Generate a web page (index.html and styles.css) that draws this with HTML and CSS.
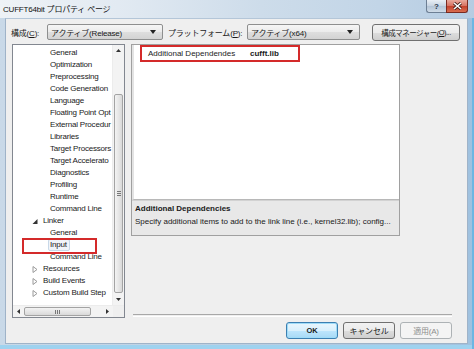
FILE: index.html
```html
<!DOCTYPE html>
<html lang="ja">
<head>
<meta charset="utf-8">
<title>CUFFT64bit プロパティ ページ</title>
<link rel="stylesheet" href="styles.css">
</head>
<body>
<div class="window">
  <div class="titlebar">
    <span class="title">CUFFT64bit プロパティ ページ</span>
    <div class="caption-btns">
      <span class="cap help">?</span>
      <span class="cap close"><svg width="9" height="8" viewBox="0 0 9 8"><path d="M1 1 L8 7 M8 1 L1 7" stroke="#3a1a14" stroke-width="3"/><path d="M1 1 L8 7 M8 1 L1 7" stroke="#fff" stroke-width="1.6"/></svg></span>
    </div>
  </div>
  <div class="frame">
    <div class="client">
      <div class="toolbar">
        <span class="lbl lbl1">構成(<u>C</u>):</span>
        <div class="combo c1"><span class="combo-text">アクティブ(Release)</span><svg class="drop" width="6" height="4" viewBox="0 0 6 4"><path d="M0 0 H6 L3 4 Z" fill="#222"/></svg></div>
        <span class="lbl lbl2">プラットフォーム(<u>P</u>):</span>
        <div class="combo c2"><span class="combo-text">アクティブ(x64)</span><svg class="drop" width="6" height="4" viewBox="0 0 6 4"><path d="M0 0 H6 L3 4 Z" fill="#222"/></svg></div>
        <div class="btn cfg">構成マネージャー(<u>O</u>)...</div>
      </div>
      <div class="main">
        <div class="tree">
          <div class="tree-view">
            <ul class="items">
              <li class="l2">General</li>
              <li class="l2">Optimization</li>
              <li class="l2">Preprocessing</li>
              <li class="l2">Code Generation</li>
              <li class="l2">Language</li>
              <li class="l2">Floating Point Opt</li>
              <li class="l2">External Procedur</li>
              <li class="l2">Libraries</li>
              <li class="l2">Target Processors</li>
              <li class="l2">Target Accelerato</li>
              <li class="l2">Diagnostics</li>
              <li class="l2">Profiling</li>
              <li class="l2">Runtime</li>
              <li class="l2">Command Line</li>
              <li class="l1"><svg class="exp" width="5" height="5" viewBox="0 0 5 5"><path d="M5 0 V5 H0 Z" fill="#333"/></svg>Linker</li>
              <li class="l2">General</li>
              <li class="l2"><span class="sel">Input</span></li>
              <li class="l2">Command Line</li>
              <li class="l1"><svg class="exp" width="5" height="7" viewBox="0 0 5 7"><path d="M0.5 0.5 L4.5 3.5 L0.5 6.5 Z" fill="none" stroke="#9a9a9a"/></svg>Resources</li>
              <li class="l1"><svg class="exp" width="5" height="7" viewBox="0 0 5 7"><path d="M0.5 0.5 L4.5 3.5 L0.5 6.5 Z" fill="none" stroke="#9a9a9a"/></svg>Build Events</li>
              <li class="l1"><svg class="exp" width="5" height="7" viewBox="0 0 5 7"><path d="M0.5 0.5 L4.5 3.5 L0.5 6.5 Z" fill="none" stroke="#9a9a9a"/></svg>Custom Build Step</li>
            </ul>
            <div class="vscroll">
              <div class="arr"><svg width="5" height="3" viewBox="0 0 5 3"><path d="M0 3 L2.5 0 L5 3 Z" fill="#333"/></svg></div>
              <div class="vtrack"><div class="vthumb"><span class="grip-h"></span></div></div>
              <div class="arr"><svg width="5" height="3" viewBox="0 0 5 3"><path d="M0 0 L2.5 3 L5 0 Z" fill="#333"/></svg></div>
            </div>
          </div>
          <div class="hscroll">
            <div class="harr"><svg width="3" height="5" viewBox="0 0 3 5"><path d="M3 0 L0 2.5 L3 5 Z" fill="#333"/></svg></div>
            <div class="htrack"><div class="hthumb"><span class="grip-v"></span></div></div>
            <div class="harr"><svg width="3" height="5" viewBox="0 0 3 5"><path d="M0 0 L3 2.5 L0 5 Z" fill="#333"/></svg></div>
            <div class="corner"></div>
          </div>
          <div class="mark-input"></div>
        </div>
        <div class="right">
          <div class="panel">
            <div class="grid">
              <div class="row"><span class="name">Additional Dependendes</span><span class="val">cufft.lib</span></div>
            </div>
            <div class="desc">
              <div class="desc-title">Additional Dependencies</div>
              <div class="desc-text">Specify additional items to add to the link line (i.e., kernel32.lib); config...</div>
            </div>
          </div>
          <div class="sep"></div>
        </div>
      </div>
      <div class="buttons">
        <div class="btn dlg ok">OK</div>
        <div class="btn dlg">キャンセル</div>
        <div class="btn dlg disabled">適用(A)</div>
      </div>
    </div>
  </div>
</div>
</body>
</html>
```
FILE: styles.css
```css
html, body {
  margin: 0;
  padding: 0;
}
body {
  width: 474px;
  height: 349px;
  overflow: hidden;
  font-family: "Liberation Sans", "Noto Sans CJK JP", sans-serif;
  font-size: 8px;
  color: #1a1a1a;
}
.window {
  width: 474px;
  height: 349px;
  display: flex;
  flex-direction: column;
  background: linear-gradient(90deg, #c9d9e8 0%, #b7cde2 60%, #9fc1df 100%);
}
.titlebar {
  height: 18px;
  flex: none;
  display: flex;
  align-items: flex-start;
  justify-content: space-between;
  background: linear-gradient(90deg, #eef2f6 0%, #e2eaf2 25%, #cddcea 55%, #c2d5e7 80%, #b5cce2 100%);
}
.title {
  margin: 4px 0 0 3px;
  font-size: 8px;
  line-height: 12px;
  color: #111;
  letter-spacing: -0.2px;
}
.caption-btns {
  display: flex;
  margin-right: 6px;
}
.cap {
  height: 13px;
  display: flex;
  align-items: center;
  justify-content: center;
  box-sizing: border-box;
  border: 1px solid #6d7f94;
  border-top: none;
}
.help {
  width: 20px;
  border-radius: 0 0 0 3px;
  border-right: none;
  background: linear-gradient(#e9eff5, #c7d4e2 50%, #b3c4d6 51%, #cfdbe7);
  font-size: 8px;
  font-weight: bold;
  color: #2a3a4c;
}
.close {
  width: 22px;
  border-radius: 0 0 3px 0;
  border-color: #7a2a20;
  background: linear-gradient(#e9a99c, #d7715f 50%, #c4402b 51%, #d96d4f);
}
.frame {
  flex: 1;
  display: flex;
  padding: 0 6px 5px 5px;
  box-shadow: inset -2px 0 0 #6cb6e2, inset 0 -4px 0 #9fd2ef;
}
.client {
  flex: 1;
  display: flex;
  flex-direction: column;
  background: #efefef;
  border: 1px solid #9fb3c8;
  border-top-color: #b4c6d8;
  box-sizing: border-box;
}
.toolbar {
  display: flex;
  align-items: center;
  height: 16px;
  margin-top: 5px;
  padding-left: 5px;
}
.lbl {
  font-size: 8px;
  white-space: nowrap;
  letter-spacing: -0.2px;
}
.lbl1 {
  width: 36px;
}
.lbl2 {
  width: 79px;
  margin-left: 5px;
}
.combo {
  height: 16px;
  box-sizing: border-box;
  border: 1px solid #8e8f8f;
  border-radius: 2px;
  background: linear-gradient(#f6f6f6, #ebebeb 50%, #dedede 51%, #d3d3d3);
  display: flex;
  align-items: center;
  justify-content: space-between;
  padding: 0 6px 0 3px;
}
.combo-text {
  font-size: 8px;
  white-space: nowrap;
  letter-spacing: -0.2px;
}
.c1 {
  width: 116px;
}
.c2 {
  width: 113px;
}
.btn {
  box-sizing: border-box;
  border: 1px solid #707070;
  border-radius: 3px;
  background: linear-gradient(#f2f2f2, #ebebeb 50%, #dddddd 51%, #cfcfcf);
  display: flex;
  align-items: center;
  justify-content: center;
  white-space: nowrap;
  font-size: 8px;
  letter-spacing: -0.2px;
}
.cfg {
  width: 88px;
  height: 17px;
  margin-left: 12px;
  font-size: 7.5px;
  letter-spacing: -0.5px;
}
.main {
  display: flex;
  height: 274px;
  margin-top: 4px;
  padding-left: 6px;
}
.tree {
  position: relative;
  width: 113px;
  box-sizing: border-box;
  border: 1px solid #828790;
  background: #fff;
  display: flex;
  flex-direction: column;
}
.tree-view {
  flex: 1;
  display: flex;
  min-height: 0;
}
.items {
  flex: 1;
  min-width: 0;
  margin: 0;
  padding: 2px 0 0 0;
  list-style: none;
  overflow: hidden;
  letter-spacing: -0.2px;
}
.items li {
  height: 12px;
  line-height: 12px;
  white-space: nowrap;
  display: flex;
  align-items: center;
}
.l2 {
  padding-left: 37px;
}
.l1 {
  padding-left: 18px;
}
.exp {
  width: 8px;
  margin-right: 0;
  flex: none;
}
.l1 .exp {
  margin-right: 4px;
}
.sel {
  display: inline-block;
  line-height: 10px;
  padding: 0 2px 0 1px;
  margin-left: -2px;
  border: 1px solid #c8d8e8;
  border-radius: 2px;
  background: #f1f4f8;
}
.vscroll {
  width: 11px;
  flex: none;
  display: flex;
  flex-direction: column;
  background: #f3f3f3;
  border-left: 1px solid #ececec;
}
.arr {
  height: 11px;
  flex: none;
  display: flex;
  align-items: center;
  justify-content: center;
}
.vtrack {
  flex: 1;
  padding-top: 38px;
  padding-bottom: 1px;
  display: flex;
  flex-direction: column;
}
.vthumb {
  flex: 1;
  margin: 0 1px;
  border: 1px solid #a3a3a3;
  border-radius: 2px;
  background: linear-gradient(90deg, #f3f3f3, #e6e6e6 50%, #d9d9d9);
  display: flex;
  align-items: center;
  justify-content: center;
}
.grip-h {
  width: 4px;
  height: 5px;
  background: repeating-linear-gradient(#777 0 1px, transparent 1px 2px);
}
.hscroll {
  height: 11px;
  flex: none;
  display: flex;
  background: #f3f3f3;
  border-top: 1px solid #ececec;
}
.harr {
  width: 11px;
  flex: none;
  display: flex;
  align-items: center;
  justify-content: center;
}
.htrack {
  flex: 1;
  padding-right: 11px;
  display: flex;
}
.hthumb {
  width: 65px;
  margin: 1px 0;
  border: 1px solid #a3a3a3;
  border-radius: 2px;
  background: linear-gradient(#f3f3f3, #e6e6e6 50%, #d9d9d9);
  display: flex;
  align-items: center;
  justify-content: center;
}
.grip-v {
  width: 5px;
  height: 4px;
  background: repeating-linear-gradient(90deg, #777 0 1px, transparent 1px 2px);
}
.corner {
  width: 11px;
  flex: none;
  background: #efefef;
}
.mark-input {
  position: absolute;
  left: 9px;
  top: 193px;
  width: 75px;
  height: 16px;
  box-sizing: border-box;
  border: 2px solid #d42a2a;
}
.right {
  width: 321px;
  margin-left: 6px;
  display: flex;
  flex-direction: column;
  justify-content: space-between;
}
.panel {
  width: 269px;
  height: 192px;
  box-sizing: border-box;
  border: 1px solid #a0a0a0;
  display: flex;
  flex-direction: column;
}
.grid {
  height: 154px;
  background: #fff;
  border-bottom: 1px solid #b8b8b8;
  border-left: 2px solid #e3e3e3;
}
.row {
  display: flex;
  width: 160px;
  height: 17px;
  margin-left: 6px;
  box-sizing: border-box;
  border: 2px solid #d42a2a;
  align-items: center;
  font-size: 8px;
}
.name {
  width: 102px;
  padding-left: 6px;
  white-space: nowrap;
  color: #222;
}
.val {
  font-weight: bold;
  padding-left: 0;
}
.desc {
  flex: 1;
  background: #e8e8e8;
  border-top: 1px solid #d2d2d2;
  padding: 1px 3px 0 3px;
  font-size: 8px;
  line-height: 13px;
  white-space: nowrap;
  overflow: hidden;
}
.desc-title {
  font-weight: bold;
}
.sep {
  height: 1px;
  margin: 0 0 1px 2px;
  border-top: 1px solid #a8a8a8;
  border-bottom: 1px solid #fff;
}
.buttons {
  display: flex;
  justify-content: flex-end;
  gap: 5px;
  margin-top: 4px;
  padding-right: 15px;
}
.dlg {
  width: 52px;
  height: 17px;
}
.ok {
  border-color: #3c7fb1;
  background: linear-gradient(#eaf6fd, #d9f0fc 50%, #bee6fd 51%, #a7d9f5);
  box-shadow: inset 0 0 0 1px #9fdcf8;
  font-weight: bold;
  font-size: 7.5px;
}
.disabled {
  border-color: #adb2b5;
  background: #f4f4f4;
  color: #8d8d8d;
}
```
